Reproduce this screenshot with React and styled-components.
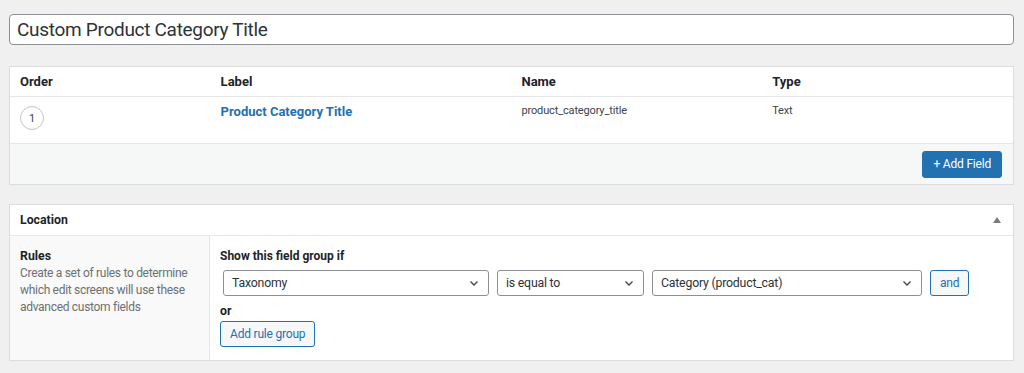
import React from "react";
import styled, { createGlobalStyle } from "styled-components";

const Global = createGlobalStyle`
  html, body { margin: 0; padding: 0; background: #f0f0f1; }
  body { font-family: Roboto, "Liberation Sans", sans-serif; color: #1d2327; font-size: 13px; }
  * { box-sizing: border-box; }
`;

const Page = styled.div`
  padding: 14px 10px 14px 9px;
  display: flex;
  flex-direction: column;
`;

const TitleInput = styled.div`
  height: 31px;
  border: 1px solid #8c8f94;
  border-radius: 4px;
  background: #fff;
  display: flex;
  align-items: center;
  padding: 0 7px;
  font-size: 19px;
  letter-spacing: -0.3px;
  color: #2c3338;
`;

const Box = styled.div`
  margin-top: ${(p) => p.$mt}px;
  background: #fff;
  border: 1px solid #dcdcde;
`;

const Grid = styled.div`
  display: grid;
  grid-template-columns: 20% 30% 25% 25%;
`;

const HeadCell = styled.div`
  height: 30px;
  display: flex;
  align-items: center;
  padding: 0 10px;
  font-weight: 700;
  font-size: 13px;
  color: #1d2327;
  border-bottom: 1px solid #e6e6e8;
`;

const Cell = styled.div`
  height: 46px;
  padding: ${(p) => (p.$circle ? "9px 10px" : "7px 10px")};
  font-size: ${(p) => (p.$small ? "11px" : "13px")};
  letter-spacing: ${(p) => (p.$small ? "-0.15px" : "0")};
  color: #3c434a;
`;

const OrderBadge = styled.div`
  width: 24px;
  height: 24px;
  border: 1px solid #c3c4c7;
  border-radius: 50%;
  display: flex;
  align-items: center;
  justify-content: center;
  font-size: 11px;
  color: #3c434a;
`;

const LabelLink = styled.a`
  color: #2271b1;
  font-weight: 700;
  font-size: 13px;
  text-decoration: none;
`;

const Footer = styled.div`
  height: 41px;
  background: #f6f7f7;
  border-top: 1px solid #e6e6e8;
  display: flex;
  align-items: center;
  justify-content: flex-end;
  padding-right: 11px;
`;

const PrimaryButton = styled.button`
  height: 27px;
  padding: 0 10px;
  background: #2271b1;
  border: 1px solid #2271b1;
  border-radius: 3px;
  color: #fff;
  font-family: inherit;
  font-size: 12px;
  letter-spacing: -0.2px;
`;

const BoxHeader = styled.div`
  height: 31px;
  display: flex;
  align-items: center;
  justify-content: space-between;
  padding: 0 12px 0 10px;
  font-weight: 700;
  font-size: 12.3px;
  border-bottom: 1px solid #e6e6e8;
`;

const Toggle = styled.span`
  width: 0;
  height: 0;
  border-left: 4px solid transparent;
  border-right: 4px solid transparent;
  border-bottom: 6px solid #787c82;
`;

const Body = styled.div`
  display: grid;
  grid-template-columns: 200px 1fr;
  min-height: 124px;
`;

const Side = styled.div`
  background: #f9f9f9;
  border-right: 1px solid #e6e6e8;
  padding: 12px 10px;
`;

const SideTitle = styled.div`
  font-weight: 700;
  font-size: 12.3px;
  line-height: 17px;
`;

const SideText = styled.div`
  color: #6c7075;
  font-size: 12px;
  letter-spacing: -0.3px;
  line-height: 17px;
`;

const Main = styled.div`
  padding: 12px 10px;
  display: flex;
  flex-direction: column;
  align-items: flex-start;
`;

const Caption = styled.div`
  font-weight: 700;
  font-size: 12px;
  line-height: 17px;
`;

const RuleRow = styled.div`
  display: flex;
  gap: 8px;
  margin: 5px 0 0 3px;
  align-items: center;
`;

const Select = styled.div`
  width: ${(p) => p.$w}px;
  height: 26px;
  border: 1px solid #8c8f94;
  border-radius: 3px;
  background: #fff;
  display: flex;
  align-items: center;
  justify-content: space-between;
  padding: 0 8px 0 8px;
  font-size: 12.3px;
  letter-spacing: -0.2px;
  color: #2c3338;
`;

const OutlineButton = styled.button`
  height: ${(p) => p.$h}px;
  padding: 0 ${(p) => p.$px}px;
  background: #f6f7f7;
  border: 1px solid #2271b1;
  border-radius: 3px;
  color: #2271b1;
  font-family: inherit;
  font-size: 12px;
  letter-spacing: -0.2px;
`;

const OrText = styled.div`
  font-weight: 700;
  font-size: 12.3px;
  line-height: 17px;
  margin-top: 7px;
`;

const Chevron = () => (
  <svg width="12" height="12" viewBox="0 0 12 12">
    <path d="M2.5 4.5 L6 8 L9.5 4.5" fill="none" stroke="#3c434a" strokeWidth="1.3" />
  </svg>
);

export default function App() {
  return (
    <Page>
      <Global />
      <TitleInput>Custom Product Category Title</TitleInput>

      <Box $mt={21}>
        <Grid>
          <HeadCell>Order</HeadCell>
          <HeadCell>Label</HeadCell>
          <HeadCell>Name</HeadCell>
          <HeadCell>Type</HeadCell>
          <Cell $circle>
            <OrderBadge>1</OrderBadge>
          </Cell>
          <Cell>
            <LabelLink href="#">Product Category Title</LabelLink>
          </Cell>
          <Cell $small>product_category_title</Cell>
          <Cell $small>Text</Cell>
        </Grid>
        <Footer>
          <PrimaryButton>+ Add Field</PrimaryButton>
        </Footer>
      </Box>

      <Box $mt={19}>
        <BoxHeader>
          Location
          <Toggle />
        </BoxHeader>
        <Body>
          <Side>
            <SideTitle>Rules</SideTitle>
            <SideText>
              Create a set of rules to determine which edit screens will use these advanced custom fields
            </SideText>
          </Side>
          <Main>
            <Caption>Show this field group if</Caption>
            <RuleRow>
              <Select $w={266}>
                Taxonomy
                <Chevron />
              </Select>
              <Select $w={147}>
                is equal to
                <Chevron />
              </Select>
              <Select $w={270}>
                Category (product_cat)
                <Chevron />
              </Select>
              <OutlineButton $h={26} $px={9}>and</OutlineButton>
            </RuleRow>
            <OrText>or</OrText>
            <OutlineButton $h={26} $px={9} style={{ marginTop: 1 }}>Add rule group</OutlineButton>
          </Main>
        </Body>
      </Box>
    </Page>
  );
}
